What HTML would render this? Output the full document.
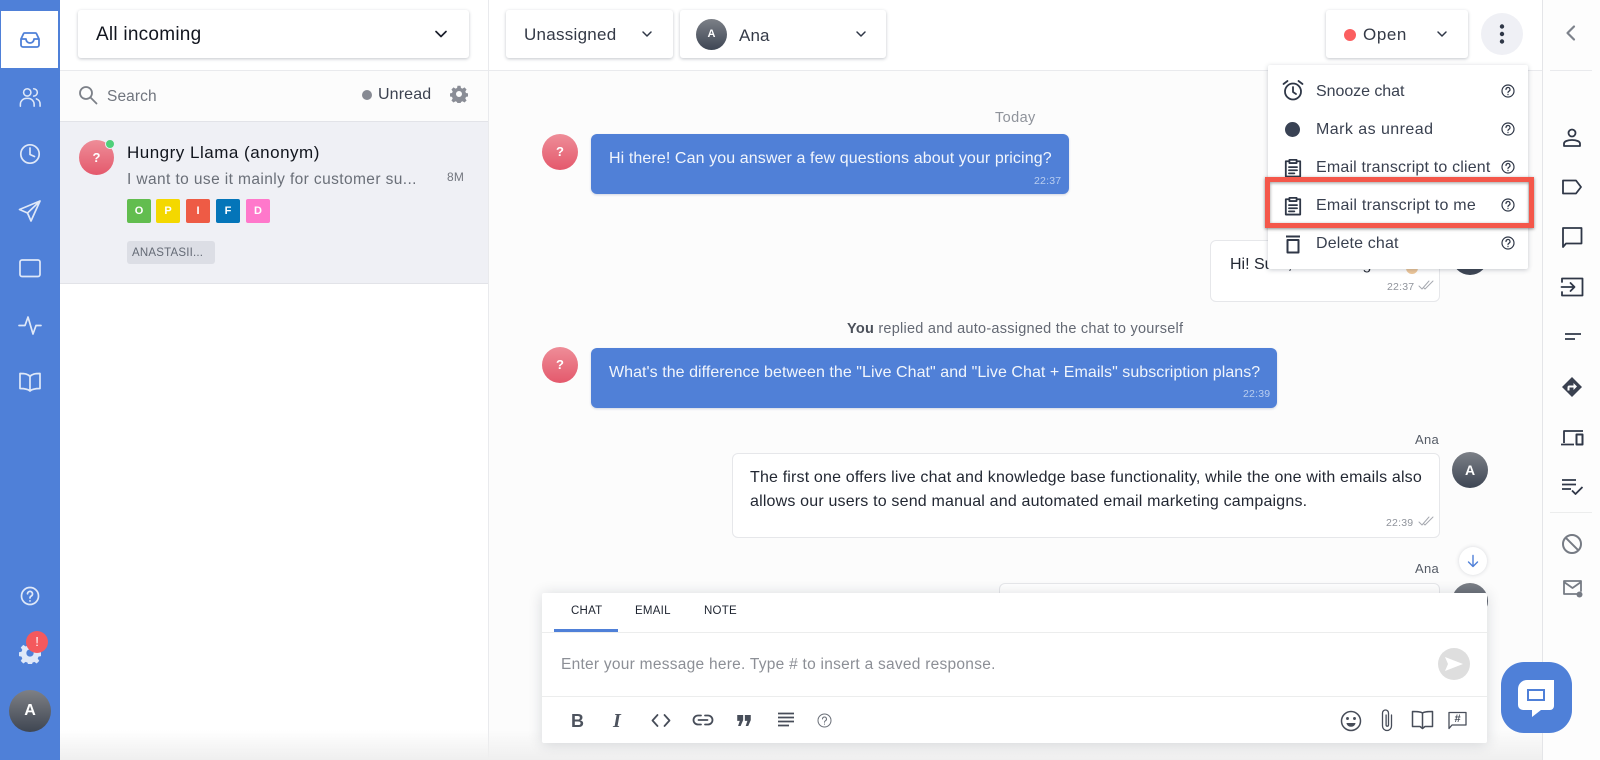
<!DOCTYPE html>
<html><head><meta charset="utf-8"><title>Chat</title>
<style>
html,body{margin:0;padding:0;width:1600px;height:760px;overflow:hidden;background:#fff}
body{position:relative;font-family:"Liberation Sans",sans-serif;color:#1c2230}
.a,.t,svg{position:absolute}
.t{white-space:nowrap;line-height:20px;height:20px}
.box{position:absolute;background:#fff;border-radius:3px;box-shadow:0 1px 3px rgba(40,50,70,.28)}
.av{position:absolute;border-radius:50%;color:#fff;font-weight:bold;text-align:center}
.q{background:linear-gradient(#ee8d98,#e4596c)}
.d{background:linear-gradient(#7c8087,#3e4654)}
.tag{position:absolute;top:199px;width:24px;height:24px;border-radius:2px;color:#fff;font:bold 11px/24px "Liberation Sans",sans-serif;text-align:center}
.bub{position:absolute;border-radius:6px}
.blue{background:#5080d7;box-shadow:0 1px 2px rgba(40,60,120,.2)}
.wh{background:#fff;border:1px solid #e6e7ea;box-sizing:border-box}
.i{fill:none;stroke:#dfe8f8;stroke-width:1.7;stroke-linecap:round;stroke-linejoin:round}
.k{fill:none;stroke:#2f3747;stroke-width:1.8;stroke-linecap:round;stroke-linejoin:round}
.c{fill:none;stroke:#2f3747;stroke-width:1.5;stroke-linecap:round;stroke-linejoin:round}
.g{fill:none;stroke:#474d59;stroke-width:1.8;stroke-linecap:round;stroke-linejoin:round}
.m{font-size:16px;color:#3a4150}
.b{font-size:16px;color:#232833}
.time{font-size:10.5px;color:#8f939b;letter-spacing:.2px}
.tab{font-size:11.5px;letter-spacing:.25px;color:#1e2430}
</style></head><body>

<!-- chat area backdrop -->
<div class="a" style="left:489px;top:71px;width:1053px;height:689px;background:#fcfcfc"></div>
<div class="a" style="left:1543px;top:0;width:57px;height:760px;background:#fdfdfd"></div>
<div class="a" style="left:60px;top:71px;width:428px;height:51px;background:#fcfcfc"></div>
<div class="a" style="left:60px;top:70px;width:1482px;height:1px;background:#e9eaed"></div>
<div class="a" style="left:488px;top:0;width:1px;height:760px;background:#e9eaed"></div>
<div class="a" style="left:1542px;top:0;width:1px;height:760px;background:#e4e5e8"></div>
<div class="a" style="left:1550px;top:70px;width:42px;height:1px;background:#e9eaed"></div>
<div class="a" style="left:60px;top:730px;width:1482px;height:30px;background:linear-gradient(rgba(235,235,235,0),#efefef)"></div>

<!-- left nav -->
<div class="a" style="left:0;top:0;width:60px;height:760px;background:#4f80d8"></div>
<div class="a" style="left:1px;top:11px;width:57px;height:57px;background:#fff"></div>
<svg style="left:20px;top:32px" width="20" height="16" viewBox="0 0 20 16"><path d="M1 7 3.500 1.700a1 1 0 0 1 1-.7h11a1 1 0 0 1 1 .7L19 7v6a2 2 0 0 1-2 2H3a2 2 0 0 1-2-2zM1 7h5a4 4 0 0 0 8 0h5" fill="none" stroke="#4f80d8" stroke-width="1.800" stroke-linejoin="round"/></svg>
<svg class="i" style="left:19px;top:86px" width="22" height="22" viewBox="0 0 24 24"><circle cx="9" cy="7" r="4"/><path d="M1.500 22v-2a6.500 6.500 0 0 1 6.500-6.500h2a6.500 6.500 0 0 1 6.500 6.500v2M16 3a4 4 0 0 1 0 8M19 14a6 6 0 0 1 4 6v2"/></svg>
<svg class="i" style="left:18px;top:142px" width="24" height="24" viewBox="0 0 24 24"><circle cx="12" cy="12" r="9.200"/><path d="M12 6v6.500l4.500 2"/></svg>
<svg class="i" style="left:18px;top:199px" width="24" height="24" viewBox="0 0 24 24"><path d="M22 2 1.500 10.500 9.500 14 13 22zM22 2 9.500 14"/></svg>
<svg class="i" style="left:18px;top:256px" width="24" height="24" viewBox="0 0 24 24"><rect x="2" y="4" width="20" height="16.500" rx="2"/></svg>
<svg class="i" style="left:18px;top:313px" width="24" height="24" viewBox="0 0 24 24"><path d="M1 12.500h6l3-8.500 5 17 3-8.500h5"/></svg>
<svg class="i" style="left:18px;top:370px" width="24" height="24" viewBox="0 0 24 24"><path d="M12 6.500C10 4 7 3.500 2 3.500v15c5 0 8 .5 10 2.500 2-2 5-2.500 10-2.500v-15c-5 0-8 .5-10 3zM12 6.500V21"/></svg>
<svg class="i" style="left:20px;top:586px" width="20" height="20" viewBox="0 0 20 20"><circle cx="10" cy="10" r="8.500"/><path d="M7.500 7.800a2.500 2.500 0 1 1 3.800 2.200c-.9.500-1.300 1-1.300 2M10 14.800v.2"/></svg>
<svg style="left:19px;top:642px" width="22" height="22" viewBox="0 0 24 24"><path fill="#dfe8f8" fill-rule="evenodd" d="M10 1h4l.6 3 2.100.9 2.600-1.700 2.800 2.800-1.700 2.600.9 2.100 3 .6v4l-3 .6-.9 2.100 1.700 2.600-2.800 2.800-2.600-1.700-2.100.9-.6 3h-4l-.6-3-2.100-.9-2.600 1.700-2.800-2.800 1.700-2.600-.9-2.100-3-.6v-4l3-.6.900-2.100-1.700-2.600 2.800-2.800 2.600 1.700 2.100-.9zM12 8a4 4 0 1 0 0 8 4 4 0 0 0 0-8z"/></svg>
<div class="av" style="left:26px;top:631px;width:22px;height:22px;background:#f4595d;font:normal 13px/22px 'Liberation Sans',sans-serif">!</div>
<div class="av d" style="left:9px;top:690px;width:42px;height:42px;font-size:16px;line-height:42px;background:linear-gradient(#7e8085,#3f4652)">A</div>

<!-- list header -->
<div class="box" style="left:78px;top:10px;width:391px;height:48px"></div>
<div class="t" style="left:96px;top:25px;font-size:19px;letter-spacing:.25px;color:#12161f">All incoming</div>
<svg class="c" style="left:434px;top:28px;stroke:#1a1f2b;stroke-width:1.700" width="14" height="12" viewBox="0 0 14 12"><path d="M2 3.500l5 5 5-5"/></svg>
<svg class="g" style="left:78px;top:85px;stroke:#7c8088" width="20" height="20" viewBox="0 0 20 20"><circle cx="8" cy="8" r="6"/><path d="M12.500 12.500 18.500 18.500"/></svg>
<div class="t" style="left:107px;top:87px;font-size:15.500px;letter-spacing:.1px;color:#70757e">Search</div>
<div class="a" style="left:362px;top:90px;width:10px;height:10px;border-radius:50%;background:#878a93"></div>
<div class="t" style="left:378px;top:85px;font-size:16px;letter-spacing:.13px;color:#3c4250">Unread</div>
<svg style="left:450px;top:85px" width="18" height="18" viewBox="0 0 24 24"><path fill="#8a8d96" fill-rule="evenodd" d="M10 1h4l.6 3 2.100.9 2.600-1.700 2.800 2.800-1.700 2.600.9 2.100 3 .6v4l-3 .6-.9 2.100 1.700 2.600-2.800 2.800-2.600-1.700-2.100.9-.6 3h-4l-.6-3-2.100-.9-2.600 1.700-2.800-2.800 1.700-2.600-.9-2.100-3-.6v-4l3-.6.900-2.100-1.700-2.600 2.800-2.800 2.600 1.700 2.100-.9zM12 8a4 4 0 1 0 0 8 4 4 0 0 0 0-8z"/></svg>

<!-- selected conversation -->
<div class="a" style="left:60px;top:121px;width:428px;height:163px;background:#eff0f5;border-top:1px solid #e2e3e8;border-bottom:1px solid #e2e3e8;box-sizing:border-box"></div>
<div class="av q" style="left:79px;top:140px;width:35px;height:35px;font-size:13px;line-height:36px">?</div>
<div class="a" style="left:105px;top:139px;width:8px;height:8px;border-radius:50%;background:#4fd07a;border:1px solid #eff0f5"></div>
<div class="t" style="left:127px;top:143px;font-size:17px;letter-spacing:.5px;color:#11151d">Hungry Llama (anonym)</div>
<div class="t" style="left:127px;top:170px;font-size:15.500px;letter-spacing:.4px;color:#6a6f78">I want to use it mainly for customer su...</div>
<div class="t" style="left:447px;top:167px;font-size:12px;color:#73777f;letter-spacing:.2px">8M</div>
<div class="tag" style="left:127px;background:#62bd4f">O</div>
<div class="tag" style="left:156px;background:#f4d800">P</div>
<div class="tag" style="left:186px;background:#ee5b45">I</div>
<div class="tag" style="left:216px;background:#0475b9">F</div>
<div class="tag" style="left:246px;background:#ff78cb">D</div>
<div class="a" style="left:127px;top:241px;width:88px;height:23px;background:#dcdee5;border-radius:3px"></div>
<div class="t" style="left:132px;top:243px;font-size:11.500px;letter-spacing:.2px;color:#646a75">ANASTASII...</div>

<!-- chat header -->
<div class="box" style="left:506px;top:10px;width:167px;height:48px"></div>
<div class="t" style="left:524px;top:25px;font-size:17px;letter-spacing:.27px;color:#343a47">Unassigned</div>
<svg class="c" style="left:640px;top:28px" width="14" height="12" viewBox="0 0 14 12"><path d="M3 4l4 4 4-4"/></svg>
<div class="box" style="left:680px;top:10px;width:206px;height:48px"></div>
<div class="av d" style="left:696px;top:19px;width:31px;height:31px;font-size:11px;line-height:30px">A</div>
<div class="t" style="left:739px;top:26px;font-size:17px;letter-spacing:.1px;color:#343a47">Ana</div>
<svg class="c" style="left:854px;top:28px" width="14" height="12" viewBox="0 0 14 12"><path d="M3 4l4 4 4-4"/></svg>
<div class="box" style="left:1326px;top:10px;width:142px;height:48px"></div>
<div class="a" style="left:1344px;top:29px;width:12px;height:12px;border-radius:50%;background:#fb5f60"></div>
<div class="t" style="left:1363px;top:25px;font-size:17px;letter-spacing:.6px;color:#343a47">Open</div>
<svg class="c" style="left:1435px;top:28px" width="14" height="12" viewBox="0 0 14 12"><path d="M3 4l4 4 4-4"/></svg>
<div class="a" style="left:1481px;top:13px;width:42px;height:42px;border-radius:50%;background:#eff0f5"></div>
<svg style="left:1498px;top:24px" width="8" height="20" viewBox="0 0 8 20"><g fill="#2f3747"><circle cx="4" cy="2.500" r="2.200"/><circle cx="4" cy="10" r="2.200"/><circle cx="4" cy="17.500" r="2.200"/></g></svg>
<svg class="g" style="left:1563px;top:24px;stroke:#7d828b;stroke-width:2.200" width="16" height="18" viewBox="0 0 16 18"><path d="M11 2.500 4.500 9l6.500 6.500"/></svg>

<!-- messages -->
<div class="t" style="left:995px;top:108px;font-size:14.500px;letter-spacing:.4px;color:#8f939b">Today</div>

<div class="av q" style="left:542px;top:134px;width:36px;height:36px;font-size:13px;line-height:36px">?</div>
<div class="bub blue" style="left:591px;top:134px;width:478px;height:60px"></div>
<div class="t" style="left:609px;top:149px;font-size:16px;letter-spacing:.1px;color:#f1f5fc">Hi there! Can you answer a few questions about your pricing?</div>
<div class="t time" style="left:1034px;top:171px;color:#b9cdf0">22:37</div>

<div class="bub wh" style="left:1210px;top:240px;width:230px;height:62px"></div>
<div class="t b" style="left:1230px;top:255px">Hi! Sure, I am doing</div>
<div class="a" style="left:1406px;top:262px;width:12px;height:12px;border-radius:50%;background:#eec79a"></div>
<div class="t time" style="left:1387px;top:277px">22:37</div>
<svg class="g" style="left:1418px;top:280px;stroke:#a6a9b0;stroke-width:1" width="16" height="11" viewBox="0 0 16 11"><path d="M1 6l3 3 7-8M6 8l1 1 8-8"/></svg>
<div class="av" style="left:1452px;top:239px;width:36px;height:36px;background:#3e4654"></div>

<div class="t" style="left:847px;top:319px;font-size:14.500px;letter-spacing:.25px;color:#646974"><b style="color:#4b505a">You</b> replied and auto-assigned the chat to yourself</div>
<div class="av q" style="left:542px;top:347px;width:36px;height:36px;font-size:13px;line-height:36px">?</div>
<div class="bub blue" style="left:591px;top:348px;width:686px;height:60px"></div>
<div class="t" style="left:609px;top:363px;font-size:16px;letter-spacing:.05px;color:#f1f5fc">What's the difference between the "Live Chat" and "Live Chat + Emails" subscription plans?</div>
<div class="t time" style="left:1243px;top:384px;color:#b9cdf0">22:39</div>

<div class="t" style="left:1415px;top:430px;font-size:13px;letter-spacing:.3px;color:#555b66">Ana</div>
<div class="bub wh" style="left:732px;top:453px;width:708px;height:85px"></div>
<div class="t b" style="left:750px;top:468px;letter-spacing:.17px">The first one offers live chat and knowledge base functionality, while the one with emails also</div>
<div class="t b" style="left:750px;top:492px;letter-spacing:.18px">allows our users to send manual and automated email marketing campaigns.</div>
<div class="t time" style="left:1386px;top:513px">22:39</div>
<svg class="g" style="left:1418px;top:516px;stroke:#a6a9b0;stroke-width:1" width="16" height="11" viewBox="0 0 16 11"><path d="M1 6l3 3 7-8M6 8l1 1 8-8"/></svg>
<div class="av d" style="left:1452px;top:452px;width:36px;height:36px;font-size:14px;line-height:36px">A</div>

<div class="t" style="left:1415px;top:559px;font-size:13px;letter-spacing:.3px;color:#555b66">Ana</div>
<div class="a" style="left:1459px;top:547px;width:28px;height:28px;border-radius:50%;background:#fff;box-shadow:0 0 4px rgba(60,70,90,.2)"></div>
<svg style="left:1466px;top:554px;fill:none;stroke:#4f80d8;stroke-width:1.400;stroke-linecap:round;stroke-linejoin:round" width="14" height="14" viewBox="0 0 14 14"><path d="M7 1.500v11M2.500 8 7 12.500 11.500 8"/></svg>
<div class="bub wh" style="left:999px;top:583px;width:441px;height:40px"></div>
<div class="av d" style="left:1452px;top:583px;width:36px;height:36px"></div>

<!-- composer -->
<div class="a" style="left:542px;top:593px;width:945px;height:150px;background:#fff;border-radius:2px;box-shadow:0 1px 14px rgba(30,40,60,.17)"></div>
<div class="t tab" style="left:571px;top:601px">CHAT</div>
<div class="t tab" style="left:635px;top:601px">EMAIL</div>
<div class="t tab" style="left:704px;top:601px">NOTE</div>
<div class="a" style="left:542px;top:632px;width:945px;height:1px;background:#eceded"></div>
<div class="a" style="left:554px;top:629px;width:64px;height:2.500px;background:#4f80d8"></div>
<div class="t" style="left:561px;top:655px;font-size:15.500px;letter-spacing:.26px;color:#8c8f96">Enter your message here. Type # to insert a saved response.</div>
<div class="a" style="left:1438px;top:648px;width:32px;height:32px;border-radius:50%;background:#dedede"></div>
<svg style="left:1444px;top:655px" width="20" height="18" viewBox="0 0 20 18"><path d="M1 2l18 7-18 7 3-7z" fill="#fff"/></svg>
<div class="a" style="left:542px;top:696px;width:945px;height:1px;background:#eceded"></div>
<div class="t" style="left:571px;top:711px;font:bold 18px/20px 'Liberation Sans',sans-serif;color:#4d535e">B</div>
<div class="t" style="left:613px;top:711px;font:italic bold 20px/20px 'Liberation Serif',serif;color:#4d535e">I</div>
<svg class="g" style="left:651px;top:713px" width="20" height="15" viewBox="0 0 20 15"><path d="M6.500 2 1.500 7.500l5 5.500M13.500 2l5 5.500-5 5.500"/></svg>
<svg class="g" style="left:692px;top:712px" width="22" height="16" viewBox="0 0 22 16"><path d="M9 3.500H6a4.500 4.500 0 0 0 0 9h3M13 3.500h3a4.500 4.500 0 0 1 0 9h-3M6.500 8h9"/></svg>
<svg style="left:737px;top:715px" width="14" height="11" viewBox="0 0 16 13"><path fill="#474d59" d="M0 0h7v6l-3 7H1l2-6H0zM9 0h7v6l-3 7h-3l2-6H9z"/></svg>
<svg class="g" style="left:777px;top:712px;stroke-linecap:butt;stroke-width:1.700" width="18" height="16" viewBox="0 0 18 16"><path d="M1 1.500h16M1 5.500h16M1 9.500h16M1 13.500h11"/></svg>
<svg class="g" style="left:817px;top:713px;stroke:#6a6f78;stroke-width:1" width="15" height="15" viewBox="0 0 15 15"><circle cx="7.500" cy="7.500" r="6.500"/><path d="M5.500 6a2 2 0 1 1 3 1.700c-.7.400-1 .8-1 1.500M7.500 11v.2"/></svg>
<svg class="g" style="left:1340px;top:710px;stroke-width:1.500" width="22" height="22" viewBox="0 0 22 22"><circle cx="11" cy="11" r="9.500"/><circle cx="7.500" cy="8.500" r=".7" fill="#474d59"/><circle cx="14.500" cy="8.500" r=".7" fill="#474d59"/><path d="M7 13.500h8c-.7 1.700-2.100 2.700-4 2.700s-3.300-1-4-2.700z" fill="#474d59" stroke-width="1"/></svg>
<svg class="g" style="left:1379px;top:708px;stroke-width:1.300" width="16" height="24" viewBox="0 0 16 24"><path d="M12.500 7v11a4.500 4.500 0 0 1-9 0V5a3 3 0 0 1 6 0v12a1.200 1.200 0 0 1-2.400 0V7"/></svg>
<svg class="g" style="left:1411px;top:710px;stroke-width:1.500" width="23" height="20" viewBox="0 0 23 20"><path d="M11.500 3C9.500 1.500 6 1.500 1.500 1.500v15H9l2.500 2 2.500-2h7.500v-15C17 1.500 13.500 1.500 11.500 3zM11.500 3v15"/></svg>
<svg class="g" style="left:1448px;top:711px;stroke-width:1.300" width="19" height="19" viewBox="0 0 19 19"><path d="M1 1.500h17v12.500H4L1 17.500z"/><text x="9.500" y="11" text-anchor="middle" font-family="Liberation Sans" font-size="11" font-weight="bold" fill="#474d59" stroke="none">#</text></svg>

<!-- chat widget -->
<div class="a" style="left:1501px;top:662px;width:71px;height:71px;border-radius:23px;background:#4f80d8"></div>
<svg style="left:1517px;top:679px" width="38" height="38" viewBox="0 0 38 38"><path fill="#fff" d="M10 1h27v26a4 4 0 0 1-4 4H24l-9 7v-7H6a5 5 0 0 1-5-5V10a9 9 0 0 1 9-9z"/><rect x="11" y="11" width="16" height="10" fill="none" stroke="#4f80d8" stroke-width="2"/></svg>

<!-- right rail -->
<svg class="k" style="left:1561px;top:127px" width="22" height="22" viewBox="0 0 22 22"><circle cx="11" cy="6" r="3.500"/><path d="M3 19v-2.500c0-2 3.500-3.500 8-3.500s8 1.500 8 3.500V19z"/></svg>
<svg class="k" style="left:1561px;top:177px" width="22" height="20" viewBox="0 0 22 20"><path d="M2 3.500h13l5 6.500-5 6.500H2z"/></svg>
<svg class="k" style="left:1561px;top:226px" width="22" height="22" viewBox="0 0 22 22"><path d="M2 2h18.500v15.500H5L2 21z"/></svg>
<svg class="k" style="left:1560px;top:276px" width="24" height="22" viewBox="0 0 24 22"><path d="M2 6V2.500h20.500v17H2V16M1.500 11h13M10.500 7l4 4-4 4"/></svg>
<svg class="k" style="left:1562px;top:332px;stroke-linecap:butt" width="20" height="10" viewBox="0 0 20 10"><path d="M3 2h16M3 7h10"/></svg>
<svg style="left:1561px;top:376px" width="22" height="22" viewBox="0 0 22 22"><path fill="#3a4150" fill-rule="evenodd" d="M11 1l10 10-10 10L1 11zM6.500 14.500h2v-3h4V14l3.500-3.500L12.500 7v2.500h-4a2 2 0 0 0-2 2z"/></svg>
<svg class="k" style="left:1560px;top:428px;stroke-linecap:butt" width="24" height="20" viewBox="0 0 24 20"><path d="M4 15V3h19M1 16.500h13"/><rect x="16.500" y="6.500" width="6" height="10" stroke-width="2"/></svg>
<svg class="k" style="left:1561px;top:478px;stroke-linecap:butt" width="22" height="18" viewBox="0 0 22 18"><path d="M1 2h14M1 6.500h14M1 11h9M11 12.500l3.500 3.500 7-7"/></svg>
<div class="a" style="left:1550px;top:512px;width:42px;height:1px;background:#eceded"></div>
<svg class="g" style="left:1561px;top:533px;stroke:#767b84;stroke-width:2" width="22" height="22" viewBox="0 0 22 22"><circle cx="11" cy="11" r="9"/><path d="M4.800 4.800 17.200 17.200"/></svg>
<svg class="g" style="left:1562px;top:579px;stroke:#767b84;stroke-width:1.800" width="22" height="20" viewBox="0 0 22 20"><path d="M16 15H2V2h17v10M2 3l8.500 6L19 3"/><circle cx="17.500" cy="15.500" r="3" fill="#767b84" stroke="none"/></svg>

<!-- dropdown menu -->
<div class="a" style="left:1268px;top:65px;width:260px;height:204px;background:#fff;border-radius:2px;box-shadow:0 1px 5px rgba(40,50,70,.25)"></div>
<svg class="k" style="left:1282px;top:79px" width="22" height="22" viewBox="0 0 22 22"><circle cx="11" cy="12.500" r="8"/><path d="M11 8v5l3 2M1.500 5l4-3M20.500 5l-4-3"/></svg>
<div class="t m" style="left:1316px;top:82px;letter-spacing:-.05px">Snooze chat</div>
<div class="a" style="left:1285px;top:122px;width:15px;height:15px;border-radius:50%;background:#394254"></div>
<div class="t m" style="left:1316px;top:120px;letter-spacing:.45px">Mark as unread</div>
<svg class="k" style="left:1284px;top:158px;stroke-width:2" width="18" height="20" viewBox="0 0 20 22"><path d="M6 3.500H2v17h16v-17h-4M6 2h8v3.500H6zM5.500 10h9M5.500 13.500h9M5.500 17h6"/></svg>
<div class="t m" style="left:1316px;top:158px;letter-spacing:.18px">Email transcript to client</div>
<svg class="k" style="left:1284px;top:196px;stroke-width:2" width="18" height="20" viewBox="0 0 20 22"><path d="M6 3.500H2v17h16v-17h-4M6 2h8v3.500H6zM5.500 10h9M5.500 13.500h9M5.500 17h6"/></svg>
<div class="t m" style="left:1316px;top:196px;letter-spacing:.24px">Email transcript to me</div>
<svg class="k" style="left:1283px;top:234px;stroke-linecap:butt" width="20" height="20" viewBox="0 0 20 20"><rect x="4.500" y="6" width="11" height="12.500" stroke-width="2"/><path d="M3 2.500h14" stroke-width="2"/></svg>
<div class="t m" style="left:1316px;top:234px;letter-spacing:.15px">Delete chat</div>
<svg class="c" style="left:1501px;top:84px;stroke-width:1.200" width="14" height="14" viewBox="0 0 14 14"><circle cx="7" cy="7" r="6"/><path d="M5 5.500a2 2 0 1 1 3 1.700c-.7.400-1 .7-1 1.300M7 10.400v.2"/></svg>
<svg class="c" style="left:1501px;top:122px;stroke-width:1.200" width="14" height="14" viewBox="0 0 14 14"><circle cx="7" cy="7" r="6"/><path d="M5 5.500a2 2 0 1 1 3 1.700c-.7.400-1 .7-1 1.300M7 10.400v.2"/></svg>
<svg class="c" style="left:1501px;top:160px;stroke-width:1.200" width="14" height="14" viewBox="0 0 14 14"><circle cx="7" cy="7" r="6"/><path d="M5 5.500a2 2 0 1 1 3 1.700c-.7.400-1 .7-1 1.300M7 10.400v.2"/></svg>
<svg class="c" style="left:1501px;top:198px;stroke-width:1.200" width="14" height="14" viewBox="0 0 14 14"><circle cx="7" cy="7" r="6"/><path d="M5 5.500a2 2 0 1 1 3 1.700c-.7.400-1 .7-1 1.300M7 10.400v.2"/></svg>
<svg class="c" style="left:1501px;top:236px;stroke-width:1.200" width="14" height="14" viewBox="0 0 14 14"><circle cx="7" cy="7" r="6"/><path d="M5 5.500a2 2 0 1 1 3 1.700c-.7.400-1 .7-1 1.300M7 10.400v.2"/></svg>

<!-- highlight box -->
<div class="a" style="left:1265px;top:177px;width:269px;height:51px;box-sizing:border-box;border:5px solid #f4574a;box-shadow:0 1px 3px rgba(30,30,30,.5),inset 0 1px 3px rgba(30,30,30,.45)"></div>
</body></html>
